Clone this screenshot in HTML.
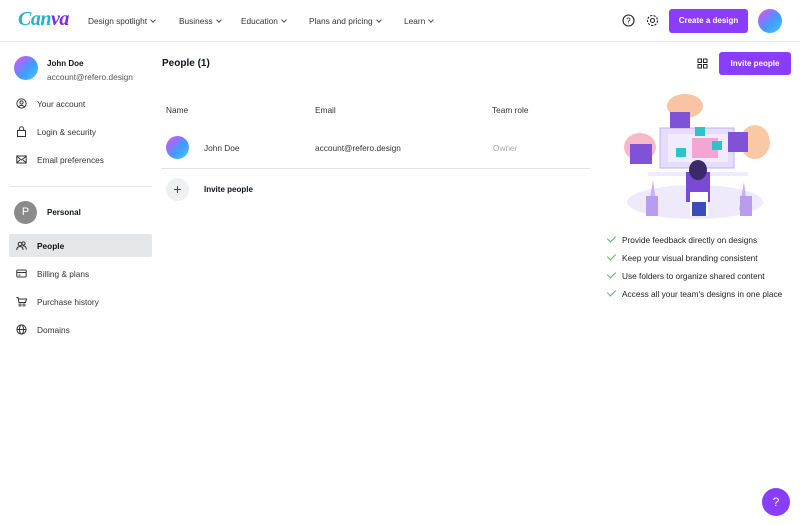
<!DOCTYPE html>
<html><head><meta charset="utf-8"><style>
*{margin:0;padding:0;box-sizing:border-box}
body{width:800px;height:525px;background:#fff;font-family:"Liberation Sans",sans-serif;color:#0e1318;position:relative;overflow:hidden;font-size:8px}
.abs{position:absolute}
.hdr{left:0;top:0;width:800px;height:42px;border-bottom:1px solid #e6e8ea}
.logo{left:18px;top:8px;font-family:"Liberation Serif",serif;font-style:italic;font-weight:bold;font-size:20px;color:#20b5c9;letter-spacing:-0.5px}
.logo span{color:#7d2ae8}
.nav{top:16px;font-size:8.3px;color:#333}
.nav::after{content:"";display:inline-block;width:3px;height:3px;border-right:1px solid #555;border-bottom:1px solid #555;transform:rotate(45deg);margin-left:4px;position:relative;top:-2px}
.btn{background:#8b3dff;color:#fff;font-weight:bold;font-size:8px;border-radius:3px;text-align:center}
.av{border-radius:50%;background:linear-gradient(135deg,#ff5ea8 0%,#a06bff 25%,#3aa0ff 60%,#56c6ff 100%)}
.si{left:20px;font-size:8.3px;color:#333}
.ic{position:absolute;left:-4px;top:-1px;width:11px;height:11px}
.chk{left:606px;font-size:8.3px;color:#222}
.chk::before{content:"";position:absolute;left:3px;top:-1px;width:4px;height:7px;border-right:1.3px solid #5cb85c;border-bottom:1.3px solid #5cb85c;transform:rotate(45deg)}
.chk span{margin-left:16px}
</style></head><body>
<div class="abs hdr"></div>
<div class="abs logo">Can<span>va</span></div>
<div class="abs nav" style="left:88px">Design spotlight</div>
<div class="abs nav" style="left:179px">Business</div>
<div class="abs nav" style="left:241px">Education</div>
<div class="abs nav" style="left:309px">Plans and pricing</div>
<div class="abs nav" style="left:404px">Learn</div>
<svg class="abs" style="left:622px;top:14px" width="13" height="13" viewBox="0 0 13 13"><circle cx="6.5" cy="6.5" r="5.5" fill="none" stroke="#222" stroke-width="1.1"/><text x="6.5" y="9.3" font-size="8" text-anchor="middle" font-family="Liberation Sans" fill="#222">?</text></svg>
<svg class="abs" style="left:646px;top:14px" width="13" height="13" viewBox="0 0 13 13"><circle cx="6.5" cy="6.5" r="2" fill="none" stroke="#222" stroke-width="1.1"/><circle cx="6.5" cy="6.5" r="5" fill="none" stroke="#222" stroke-width="1.1" stroke-dasharray="2.2 1.3"/></svg>
<div class="abs btn" style="left:669px;top:9px;width:79px;height:24px;line-height:24px">Create a design</div>
<div class="abs av" style="left:758px;top:9px;width:24px;height:24px"></div>

<div class="abs av" style="left:14px;top:56px;width:24px;height:24px"></div>
<div class="abs" style="left:47px;top:59px;font-weight:bold;font-size:8px">John Doe</div>
<div class="abs" style="left:47px;top:72px;font-size:8.3px;color:#555">account@refero.design</div>

<div class="abs si" style="top:99px"><svg class="ic" viewBox="0 0 11 11"><circle cx="5.5" cy="5.5" r="4.6" fill="none" stroke="#333"/><circle cx="5.5" cy="4.5" r="1.6" fill="none" stroke="#333"/><path d="M2.8 8.6c1.4-1.6 4-1.6 5.4 0" fill="none" stroke="#333"/></svg><span style="margin-left:17px">Your account</span></div>
<div class="abs si" style="top:127px"><svg class="ic" viewBox="0 0 11 11"><rect x="1.5" y="4.5" width="8" height="6" fill="none" stroke="#333"/><path d="M3.3 4.5V3a2.2 2.2 0 014.4 0v1.5" fill="none" stroke="#333"/></svg><span style="margin-left:17px">Login &amp; security</span></div>
<div class="abs si" style="top:155px"><svg class="ic" viewBox="0 0 11 11"><rect x="0.8" y="2" width="9.4" height="7" fill="none" stroke="#333"/><path d="M1 2.5l4.5 3.5 4.5-3.5M1 8.5l3-2.5M10 8.5l-3-2.5" fill="none" stroke="#333"/></svg><span style="margin-left:17px">Email preferences</span></div>
<div class="abs" style="left:9px;top:186px;width:143px;height:1px;background:#e2e4e6"></div>
<div class="abs" style="left:14px;top:201px;width:23px;height:23px;border-radius:50%;background:#8a8a8a;color:#fff;font-size:11px;text-align:center;line-height:23px">P</div>
<div class="abs" style="left:47px;top:208px;font-weight:bold;font-size:8px">Personal</div>
<div class="abs" style="left:9px;top:234px;width:143px;height:23px;background:#e5e6e9;border-radius:2px"></div>
<div class="abs si" style="top:241px;font-weight:bold;color:#111"><svg class="ic" viewBox="0 0 11 11"><circle cx="4" cy="4" r="1.8" fill="none" stroke="#333"/><circle cx="7.5" cy="3.5" r="1.6" fill="none" stroke="#333"/><path d="M0.8 10c0-2.5 1.5-3.5 3.2-3.5S7 7.5 7 10M6.5 6c2.5-0.5 3.8 1 3.8 3.5" fill="none" stroke="#333"/></svg><span style="margin-left:17px">People</span></div>
<div class="abs si" style="top:269px"><svg class="ic" viewBox="0 0 11 11"><rect x="0.8" y="2" width="9.4" height="7" rx="1" fill="none" stroke="#333"/><path d="M1 4.5h9M2.5 7h2" stroke="#333"/></svg><span style="margin-left:17px">Billing &amp; plans</span></div>
<div class="abs si" style="top:297px"><svg class="ic" viewBox="0 0 11 11"><path d="M0.5 1.5h1.5l1 5h6.5l1-3.5H2.6" fill="none" stroke="#333"/><rect x="3" y="8" width="2" height="2" fill="none" stroke="#333" stroke-width=".8"/><rect x="7" y="8" width="2" height="2" fill="none" stroke="#333" stroke-width=".8"/></svg><span style="margin-left:17px">Purchase history</span></div>
<div class="abs si" style="top:325px"><svg class="ic" viewBox="0 0 11 11"><circle cx="5.5" cy="5.5" r="4.6" fill="none" stroke="#333"/><ellipse cx="5.5" cy="5.5" rx="2" ry="4.6" fill="none" stroke="#333"/><path d="M1 5.5h9" stroke="#333"/></svg><span style="margin-left:17px">Domains</span></div>

<div class="abs" style="left:162px;top:58px;font-weight:bold;font-size:10px">People (1)</div>
<svg class="abs" style="left:697px;top:58px" width="11" height="11" viewBox="0 0 11 11" fill="none" stroke="#222"><rect x="1" y="1" width="3.5" height="3.5"/><rect x="6.5" y="1" width="3.5" height="3.5"/><rect x="1" y="6.5" width="3.5" height="3.5"/><rect x="6.5" y="6.5" width="3.5" height="3.5"/></svg>
<div class="abs btn" style="left:719px;top:52px;width:72px;height:23px;line-height:23px">Invite people</div>

<div class="abs" style="left:166px;top:105px;font-size:8.3px;color:#333">Name</div>
<div class="abs" style="left:315px;top:105px;font-size:8.3px;color:#333">Email</div>
<div class="abs" style="left:492px;top:105px;font-size:8.3px;color:#333">Team role</div>
<div class="abs av" style="left:166px;top:136px;width:23px;height:23px"></div>
<div class="abs" style="left:204px;top:143px;font-size:8.3px;color:#333">John Doe</div>
<div class="abs" style="left:315px;top:143px;font-size:8.3px;color:#333">account@refero.design</div>
<div class="abs" style="left:493px;top:143px;font-size:8.3px;color:#aaa">Owner</div>
<div class="abs" style="left:161px;top:168px;width:429px;height:1px;background:#e2e4e6"></div>
<div class="abs" style="left:166px;top:178px;width:23px;height:23px;border-radius:50%;background:#eef0f2;text-align:center;line-height:22px;font-size:14px;color:#444">+</div>
<div class="abs" style="left:204px;top:185px;font-size:8px;font-weight:bold">Invite people</div>

<svg class="abs" style="left:620px;top:92px" width="150" height="128" viewBox="0 0 150 128">
<ellipse cx="75" cy="110" rx="68" ry="17" fill="#efeafb"/>
<ellipse cx="65" cy="14" rx="18" ry="12" fill="#f8c4a4"/>
<ellipse cx="135" cy="50" rx="15" ry="17" fill="#fbc8a6"/>
<ellipse cx="20" cy="55" rx="16" ry="14" fill="#f7b9c9"/>
<rect x="40" y="36" width="74" height="40" fill="#e6dcfb" stroke="#c2b0f3"/>
<rect x="48" y="42" width="60" height="28" fill="#f2eafd"/>
<rect x="72" y="46" width="26" height="20" fill="#f4a6d2"/>
<rect x="56" y="56" width="10" height="9" fill="#2cc4c8"/>
<rect x="75" y="35" width="10" height="9" fill="#2cc4c8"/>
<rect x="92" y="49" width="10" height="9" fill="#2cc4c8"/>
<rect x="50" y="20" width="20" height="16" fill="#8052d8"/>
<rect x="108" y="40" width="20" height="20" fill="#8052d8"/>
<rect x="10" y="52" width="22" height="20" fill="#8052d8"/>
<rect x="28" y="80" width="100" height="4" fill="#efeafd"/>
<rect x="66" y="80" width="24" height="30" fill="#7a4ad6"/>
<ellipse cx="78" cy="78" rx="9" ry="10" fill="#3a2a6a"/>
<rect x="70" y="100" width="18" height="24" fill="#fff"/>
<rect x="72" y="110" width="14" height="14" fill="#3b4db8"/>
<path d="M28 118l5-30 4 30z" fill="#c7b0f5"/>
<path d="M128 118l-4-28-5 28z" fill="#c7b0f5"/>
<rect x="26" y="104" width="12" height="20" fill="#b89cf0"/>
<rect x="120" y="104" width="12" height="20" fill="#b89cf0"/>
</svg>

<div class="abs chk" style="top:235px"><span>Provide feedback directly on designs</span></div>
<div class="abs chk" style="top:253px"><span>Keep your visual branding consistent</span></div>
<div class="abs chk" style="top:271px"><span>Use folders to organize shared content</span></div>
<div class="abs chk" style="top:289px"><span>Access all your team's designs in one place</span></div>

<div class="abs" style="left:762px;top:488px;width:28px;height:28px;border-radius:50%;background:#8b3dff;color:#fff;text-align:center;line-height:28px;font-size:12px">?</div>
</body></html>
